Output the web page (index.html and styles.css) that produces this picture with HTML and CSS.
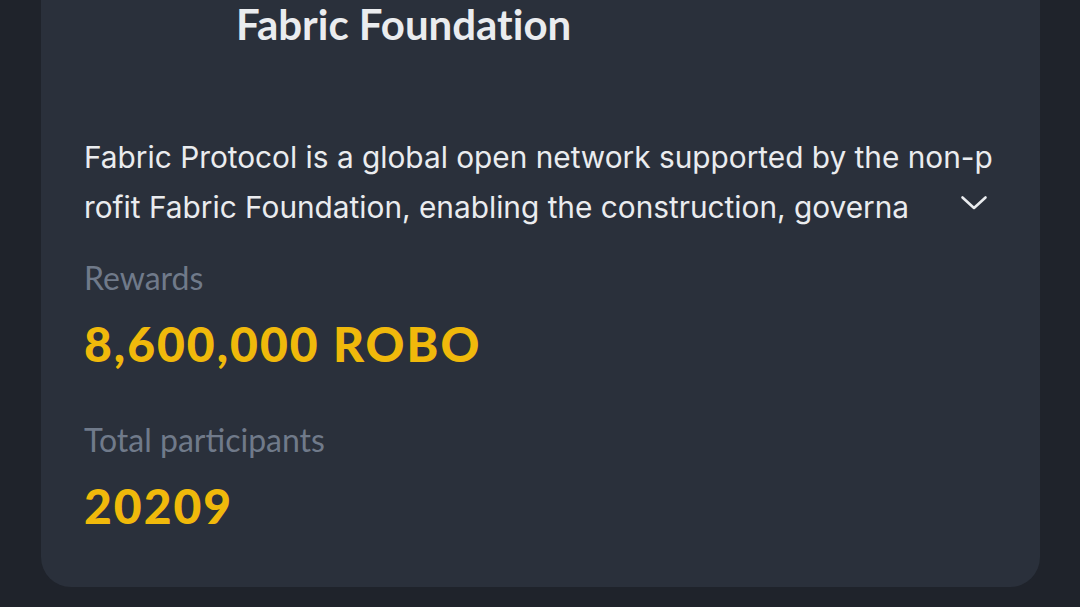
FILE: index.html
```html
<!DOCTYPE html>
<html lang="en">
<head>
<meta charset="utf-8">
<title>Fabric Foundation</title>
<link rel="stylesheet" href="styles.css">
</head>
<body>
<div class="page">
  <section class="card">
    <header class="card-head">
      <h1 class="title">Fabric Foundation</h1>
    </header>
    <div class="desc-row">
      <p class="desc">Fabric Protocol is a global open network supported by the non-p<br>rofit Fabric Foundation, enabling the construction, governa</p>
      <svg class="chev" width="28" height="18" viewBox="0 0 28 18" aria-hidden="true"><path d="M2.5 3.5 L14 14 L25.5 3.5" fill="none" stroke="#eaecef" stroke-width="2.6" stroke-linecap="round" stroke-linejoin="round"/></svg>
    </div>
    <div class="stat">
      <div class="label">Rewards</div>
      <div class="value">8,600,000 ROBO</div>
    </div>
    <div class="stat stat-2">
      <div class="label">Total participants</div>
      <div class="value">20209</div>
    </div>
  </section>
</div>
</body>
</html>
```

FILE: styles.css
```css
html, body {
  margin: 0;
  padding: 0;
  background: #1f232b;
}
.page {
  width: 1080px;
  height: 607px;
  overflow: hidden;
  padding: 0 40px 20px 41px;
  box-sizing: border-box;
  display: flex;
  flex-direction: column;
  justify-content: flex-end;
}
.card {
  background: #2a303b;
  border-radius: 0 0 30px 30px;
  padding: 0 43px 0 43px;
  height: 587px;
  box-sizing: border-box;
}
.card-head {
  padding-left: 152px;
  padding-top: 2px;
  height: 108px;
}
.title {
  margin: 0;
  font-family: Lato, "Open Sans", sans-serif;
  font-weight: 700;
  font-size: 42px;
  line-height: 44px;
  font-variant-ligatures: none;
  color: #eaecef;
}
.desc-row {
  display: grid;
  margin-top: 22px;
}
.desc {
  grid-area: 1 / 1;
  margin: 0;
  font-family: Inter, Roboto, "Noto Sans", sans-serif;
  font-size: 29.8px;
  line-height: 50px;
  color: #eaecef;
  white-space: nowrap;
}
.chev {
  grid-area: 1 / 1;
  justify-self: end;
  align-self: start;
  margin-top: 62px;
  margin-right: 9px;
}
.stat {
  margin-top: 28px;
}
.stat-2 {
  margin-top: 52px;
}
.label {
  font-family: Lato, sans-serif;
  font-size: 32px;
  line-height: 36px;
  color: #707a8a;
}
.value {
  margin-top: 22px;
  font-family: Lato, sans-serif;
  font-weight: 900;
  font-size: 48px;
  line-height: 52px;
  letter-spacing: 2px;
  color: #f0b90b;
}
```
